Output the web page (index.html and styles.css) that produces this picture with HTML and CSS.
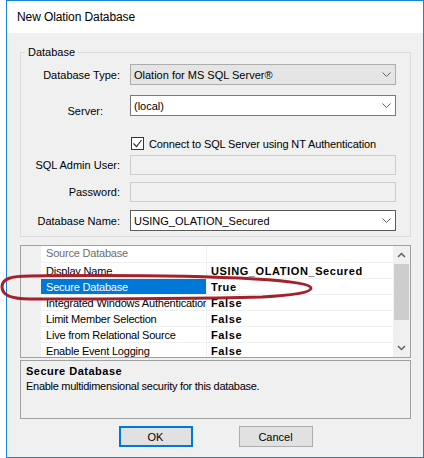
FILE: index.html
```html
<!DOCTYPE html>
<html lang="en">
<head>
  <meta charset="UTF-8">
  <title>New Olation Database</title>
  <link rel="stylesheet" href="styles.css">
</head>
<body>
  <div class="window">
    <div class="titlebar">New Olation Database</div>

    <div class="client">
      <fieldset class="group">
        <legend>Database</legend>
        <div class="form">
          <div class="row row-type">
            <label>Database Type:</label>
            <div class="combo locked">
              <span class="combo-text">Olation for MS SQL Server&reg;</span>
              <svg class="chev" width="9" height="5" viewBox="0 0 9 5"><polyline points="0.5,0.5 4.5,4.5 8.5,0.5"/></svg>
            </div>
          </div>
          <div class="row row-server">
            <label class="server-label">Server:</label>
            <div class="combo">
              <span class="combo-text">(local)</span>
              <svg class="chev" width="9" height="5" viewBox="0 0 9 5"><polyline points="0.5,0.5 4.5,4.5 8.5,0.5"/></svg>
            </div>
          </div>
          <div class="row row-check">
            <label></label>
            <div class="check">
              <span class="box">
                <svg width="11" height="11" viewBox="0 0 11 11"><polyline points="1.5,5.5 4.5,8.5 9.5,2"/></svg>
              </span>
              <span>Connect to SQL Server using NT Authentication</span>
            </div>
          </div>
          <div class="row row-admin">
            <label>SQL Admin User:</label>
            <div class="textbox disabled"></div>
          </div>
          <div class="row row-pass">
            <label>Password:</label>
            <div class="textbox disabled"></div>
          </div>
          <div class="row row-name">
            <label>Database Name:</label>
            <div class="combo focused">
              <span class="combo-text">USING_OLATION_Secured</span>
              <svg class="chev" width="9" height="5" viewBox="0 0 9 5"><polyline points="0.5,0.5 4.5,4.5 8.5,0.5"/></svg>
            </div>
          </div>
        </div>
      </fieldset>

      <div class="propgrid">
        <div class="gutter"></div>
        <div class="props">
          <div class="prop readonly"><span class="pname">Source Database</span><span class="pvalue"></span></div>
          <div class="prop"><span class="pname">Display Name</span><span class="pvalue">USING_OLATION_Secured</span></div>
          <div class="prop selected"><span class="pname">Secure Database</span><span class="pvalue">True</span></div>
          <div class="prop"><span class="pname">Integrated Windows Authentication</span><span class="pvalue">False</span></div>
          <div class="prop"><span class="pname">Limit Member Selection</span><span class="pvalue">False</span></div>
          <div class="prop"><span class="pname">Live from Relational Source</span><span class="pvalue">False</span></div>
          <div class="prop"><span class="pname">Enable Event Logging</span><span class="pvalue">False</span></div>
        </div>
        <div class="vscroll">
          <svg class="arrow" width="9" height="6" viewBox="0 0 9 6"><polyline points="1,5 4.5,1.5 8,5"/></svg>
          <div class="track"><div class="thumb"></div></div>
          <svg class="arrow" width="9" height="6" viewBox="0 0 9 6"><polyline points="1,1 4.5,4.5 8,1"/></svg>
        </div>
      </div>

      <div class="help">
        <div class="help-title">Secure Database</div>
        <div class="help-text">Enable multidimensional security for this database.</div>
      </div>

      <div class="buttons">
        <button class="btn default">OK</button>
        <button class="btn">Cancel</button>
      </div>
    </div>
  </div>

  <!-- red marker drawn around the selected property -->
  <svg class="callout" width="424" height="458" viewBox="0 0 424 458">
    <path d="M 2,287 C 2,279 10,276 30,276 C 120,275 200,276 255,279 C 292,281 311,284 311,288 C 311,292 296,295 262,297 C 180,299 80,299 30,299 C 10,299 2,295 2,287 Z"/>
  </svg>
</body>
</html>
```

FILE: styles.css
```css
body {
  margin: 0;
  font-family: "Liberation Sans", Arial, sans-serif;
  font-size: 11px;
  color: #000;
  background: #fff;
}

.window {
  box-sizing: border-box;
  width: 418px;
  height: 458px;
  margin-left: 6px;
  border: 1px solid #1883d7;
  background: #f0f0f0;
  display: flex;
  flex-direction: column;
}

.titlebar {
  height: 32px;
  line-height: 32px;
  padding-left: 10px;
  background: #fff;
  font-size: 12px;
  letter-spacing: -0.1px;
}

.client {
  flex: 1;
  padding: 0 12px 0 13px;
}

/* group box */
.group {
  margin: 13px 0 0 0;
  padding: 0 0 5px 0;
  border: 1px solid #dcdcdc;
  min-width: 0;
}

.group legend {
  margin-left: 4px;
  padding: 0 3px;
  line-height: 13px;
}

.form {
  padding-top: 5px;
}

.row {
  display: flex;
  align-items: center;
}

.row label {
  width: 99px;
  margin-right: 10px;
  text-align: right;
  flex: none;
}

.row-server { margin-top: 10px; }
.row-check { margin-top: 21px; height: 13px; }
.row-admin { margin-top: 5px; }
.row-pass { margin-top: 7px; }
.row-name { margin-top: 8px; }

.row-server .server-label {
  align-self: flex-end;
  margin-bottom: -1px;
  padding-right: 17px;
  box-sizing: border-box;
}

.combo {
  box-sizing: border-box;
  width: 266px;
  height: 21px;
  border: 1px solid #7a7a7a;
  background: #fff;
  display: flex;
  align-items: center;
  padding: 0 4px 0 3px;
}

.combo.locked {
  background: #e5e5e5;
  border-color: #adadad;
}

.combo.focused {
  border-color: #5a5a5a;
}

.combo-text {
  flex: 1;
  white-space: nowrap;
}

.chev polyline {
  fill: none;
  stroke: #606060;
  stroke-width: 1;
}

.textbox {
  box-sizing: border-box;
  width: 266px;
  height: 20px;
  border: 1px solid #cccccc;
  background: #fff;
}

.textbox.disabled {
  background: #f0f0f0;
}

.check {
  display: flex;
  align-items: center;
  gap: 5px;
  margin-left: 1px;
  letter-spacing: -0.12px;
}

.check .box {
  box-sizing: border-box;
  width: 13px;
  height: 13px;
  border: 1px solid #333;
  background: #fff;
  display: flex;
}

.check .box polyline {
  fill: none;
  stroke: #333;
  stroke-width: 1.2;
}

/* property grid */
.propgrid {
  margin-top: 8px;
  height: 113px;
  box-sizing: border-box;
  border: 1px solid #a0a0a0;
  background: #fff;
  display: flex;
  overflow: hidden;
}

.gutter {
  width: 20px;
  background: #f0f0f0;
  flex: none;
}

.props {
  flex: 1;
  overflow: hidden;
}

.prop {
  box-sizing: border-box;
  height: 16px;
  display: flex;
  border-top: 1px solid #f0f0f0;
  line-height: 16px;
  overflow: hidden;
}

.prop:first-child {
  border-top: none;
  line-height: 15px;
}

.pname {
  box-sizing: border-box;
  width: 166px;
  padding-left: 5px;
  border-right: 1px solid #f0f0f0;
  white-space: nowrap;
  overflow: hidden;
  flex: none;
  letter-spacing: -0.2px;
}

.pvalue {
  flex: 1;
  padding-left: 4px;
  font-weight: bold;
  letter-spacing: 0.6px;
  white-space: nowrap;
}

.readonly .pname {
  color: #6d6d6d;
}

.selected .pname {
  background: #0078d7;
  color: #fff;
}

.vscroll {
  width: 17px;
  flex: none;
  background: #f0f0f0;
  display: flex;
  flex-direction: column;
  align-items: center;
}

.vscroll .arrow {
  flex: none;
  margin: 6px 0;
}

.vscroll .arrow polyline {
  fill: none;
  stroke: #606060;
  stroke-width: 1.5;
}

.track {
  flex: 1;
  width: 100%;
}

.thumb {
  width: 15px;
  height: 56px;
  margin: 0 auto;
  background: #cdcdcd;
}

/* description panel */
.help {
  margin-top: 2px;
  height: 59px;
  box-sizing: border-box;
  border: 1px solid #a0a0a0;
  padding: 4px 5px;
  line-height: 13px;
}

.help-title {
  font-weight: bold;
  letter-spacing: 0.5px;
}

.help-text {
  margin-top: 2px;
  letter-spacing: -0.28px;
}

.buttons {
  display: flex;
  justify-content: center;
  gap: 46px;
  margin-top: 7px;
}

.btn {
  box-sizing: border-box;
  width: 74px;
  height: 21px;
  padding: 0;
  font-family: "Liberation Sans", Arial, sans-serif;
  font-size: 11px;
  color: #000;
  background: #e1e1e1;
  border: 1px solid #adadad;
}

.btn.default {
  border: 2px solid #0078d7;
}

.callout {
  position: absolute;
  left: 0;
  top: 0;
  pointer-events: none;
}

.callout path {
  fill: none;
  stroke: #a4212c;
  stroke-width: 3;
}
```
